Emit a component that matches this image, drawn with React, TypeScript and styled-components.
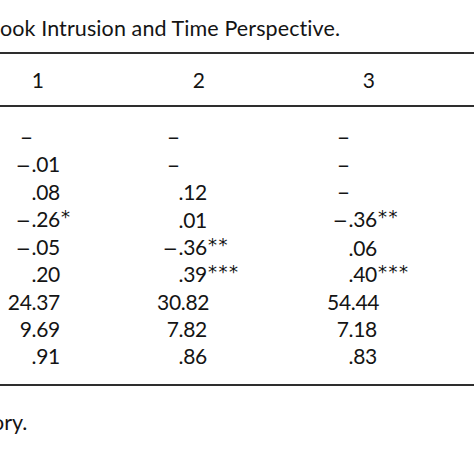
import React from 'react';
import styled, { createGlobalStyle } from 'styled-components';

const GlobalStyle = createGlobalStyle`
  html, body {
    margin: 0;
    padding: 0;
    background: #ffffff;
  }
  body {
    width: 474px;
    height: 474px;
    overflow: hidden;
    font-family: 'Lato', 'Open Sans', sans-serif;
    color: #141414;
  }
`;

type Cell = { n?: string; neg?: boolean; s?: string; dash?: boolean };

const rows: Cell[][] = [
  [{ dash: true }, { dash: true }, { dash: true }],
  [{ n: '.01', neg: true }, { dash: true }, { dash: true }],
  [{ n: '.08' }, { n: '.12' }, { dash: true }],
  [{ n: '.26', neg: true, s: '*' }, { n: '.01' }, { n: '.36', neg: true, s: '**' }],
  [{ n: '.05', neg: true }, { n: '.36', neg: true, s: '**' }, { n: '.06' }],
  [{ n: '.20' }, { n: '.39', s: '***' }, { n: '.40', s: '***' }],
  [{ n: '24.37' }, { n: '30.82' }, { n: '54.44' }],
  [{ n: '9.69' }, { n: '7.82' }, { n: '7.18' }],
  [{ n: '.91' }, { n: '.86' }, { n: '.83' }],
];

const headers = ['1', '2', '3'];

const App = () => {
  return (
    <>
      <GlobalStyle />
      <Page>
        <Title>ook Intrusion and Time Perspective.</Title>
        <Rule />
        <HeaderRow>
          {headers.map((h, i) => (
            <React.Fragment key={`h${i}`}>
              <HeadNum $first={i === 0}>{h}</HeadNum>
              <span />
            </React.Fragment>
          ))}
        </HeaderRow>
        <Rule />
        <Body>
          {rows.map((row, r) => (
            <DataRow key={`row${r}`}>
              {row.map((c, i) => (
                <React.Fragment key={`c${r}-${i}`}>
                  <Num $dash={c.dash}>
                    {c.dash && <Dash>–</Dash>}
                    {c.neg && <Minus>−</Minus>}
                    {c.n}
                  </Num>
                  <Stars>{c.s}</Stars>
                </React.Fragment>
              ))}
            </DataRow>
          ))}
        </Body>
        <Rule />
        <Note>ory.</Note>
      </Page>
    </>
  );
};

const Page = styled.div`
  width: 474px;
  display: flex;
  flex-direction: column;
`;

const Title = styled.div`
  padding-top: 14px;
  margin-bottom: 10px;
  font-size: 21.5px;
  line-height: 28px;
  letter-spacing: 0.1px;
  white-space: nowrap;
`;

const Rule = styled.div`
  height: 2px;
  background: #2e2e2e;
  width: 100%;
`;

const columns = '60px 97px 50px 120px 50px 1fr';

const HeaderRow = styled.div`
  display: grid;
  grid-template-columns: ${columns};
  align-items: center;
  height: 51px;
  font-size: 21px;
`;

const HeadNum = styled.span<{ $first?: boolean }>`
  text-align: right;
  padding-right: ${(p) => (p.$first ? '16px' : '2px')};
`;

const Body = styled.div`
  padding-top: 16px;
  padding-bottom: 14px;
`;

const DataRow = styled.div`
  display: grid;
  grid-template-columns: ${columns};
  align-items: center;
  height: 27.4px;
  font-size: 21px;
  line-height: 27px;
`;

const Num = styled.span<{ $dash?: boolean }>`
  text-align: right;
  white-space: nowrap;
  letter-spacing: -0.3px;
  padding-right: ${(p) => (p.$dash ? '28px' : '0')};
`;

const Minus = styled.span`
  font-family: 'DejaVu Sans', sans-serif;
  font-size: 18px;
  margin-right: 1px;
`;

const Dash = styled.span`
  font-family: 'DejaVu Sans', sans-serif;
  font-size: 23px;
`;

const Stars = styled.span`
  font-family: 'DejaVu Sans', sans-serif;
  font-size: 18px;
  white-space: nowrap;
  letter-spacing: 1.5px;
  padding-left: 1px;
  align-self: start;
  line-height: 24px;
`;

const Note = styled.div`
  margin-top: 22px;
  margin-left: -8px;
  font-size: 21.5px;
  line-height: 28px;
`;

export default App;
